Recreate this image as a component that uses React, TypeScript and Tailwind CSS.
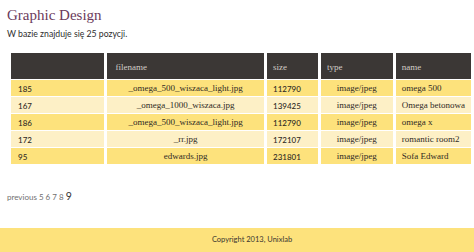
const rows = [
  { id: "185", file: "_omega_500_wiszaca_light.jpg", size: "112790", type: "image/jpeg", name: "omega 500" },
  { id: "167", file: "_omega_1000_wiszaca.jpg", size: "139425", type: "image/jpeg", name: "Omega betonowa" },
  { id: "186", file: "_omega_500_wiszaca_light.jpg", size: "112790", type: "image/jpeg", name: "omega x" },
  { id: "172", file: "_rr.jpg", size: "172107", type: "image/jpeg", name: "romantic room2" },
  { id: "95", file: "edwards.jpg", size: "231801", type: "image/jpeg", name: "Sofa Edward" },
];

const serif = "font-['Liberation_Serif',serif]";
const sans = "font-['Lato',sans-serif]";

export default function App() {
  return (
    <div className="h-screen flex flex-col bg-white overflow-hidden">
      <div className="px-[7px]">
        <h1 className={`${serif} pt-[6px] text-[15px] leading-[18px] text-[#6b3b5c]`}>Graphic Design</h1>
        <p className={`${sans} mt-[4px] text-[8.7px] leading-[12px] text-[#2e2e2e]`}>W bazie znajduje się 25 pozycji.</p>
      </div>

      <table className="ml-[8px] mt-[12px] border-separate border-spacing-x-[3px] border-spacing-y-[1px] text-left">
        <thead>
          <tr className={`${serif} text-[9px] text-[#d2cdc7]`}>
            <th className="w-[94px] h-[26px] bg-[#3b3735] px-[7px] pt-[3px] font-normal"></th>
            <th className="w-[157px] h-[26px] bg-[#3b3735] px-[8px] pt-[3px] font-normal">filename</th>
            <th className="w-[51px] h-[26px] bg-[#3b3735] px-[6px] pt-[3px] font-normal">size</th>
            <th className="w-[72px] h-[26px] bg-[#3b3735] px-[6px] pt-[3px] font-normal">type</th>
            <th className="w-[69px] h-[26px] bg-[#3b3735] px-[6px] pt-[3px] font-normal">name</th>
          </tr>
        </thead>
        <tbody>
          {rows.map((r, i) => {
            const bg = i % 2 === 0 ? "bg-[#fde27c]" : "bg-[#fdf0c6]";
            return (
              <tr key={i} className="text-[#2f2a25]">
                <td className={`${bg} ${sans} h-[16px] px-[7px] pt-[1px] text-[8px] font-medium leading-none`}>{r.id}</td>
                <td className={`${bg} ${serif} h-[16px] px-[4px] pt-[1px] text-center text-[9px] leading-none`}>{r.file}</td>
                <td className={`${bg} ${sans} h-[16px] px-[6px] pt-[1px] text-[8px] font-medium leading-none`}>{r.size}</td>
                <td className={`${bg} ${serif} h-[16px] px-[4px] pt-[1px] text-center text-[9px] leading-none`}>{r.type}</td>
                <td className={`${bg} ${serif} h-[16px] px-[6px] pt-[1px] text-[9px] leading-none whitespace-nowrap`}>{r.name}</td>
              </tr>
            );
          })}
        </tbody>
      </table>

      <div className={`${sans} mt-[24px] px-[7px] text-[8px] leading-[14px] text-[#707070]`}>
        previous 5 6 7 8 <span className="text-[10.5px] text-[#333]">9</span>
      </div>

      <footer className={`${sans} mt-auto h-[24px] bg-[#fde27c] pl-[30px] flex items-center justify-center text-[7.5px] text-[#3a3530]`}>
        Copyright 2013, Unixlab
      </footer>
    </div>
  );
}
